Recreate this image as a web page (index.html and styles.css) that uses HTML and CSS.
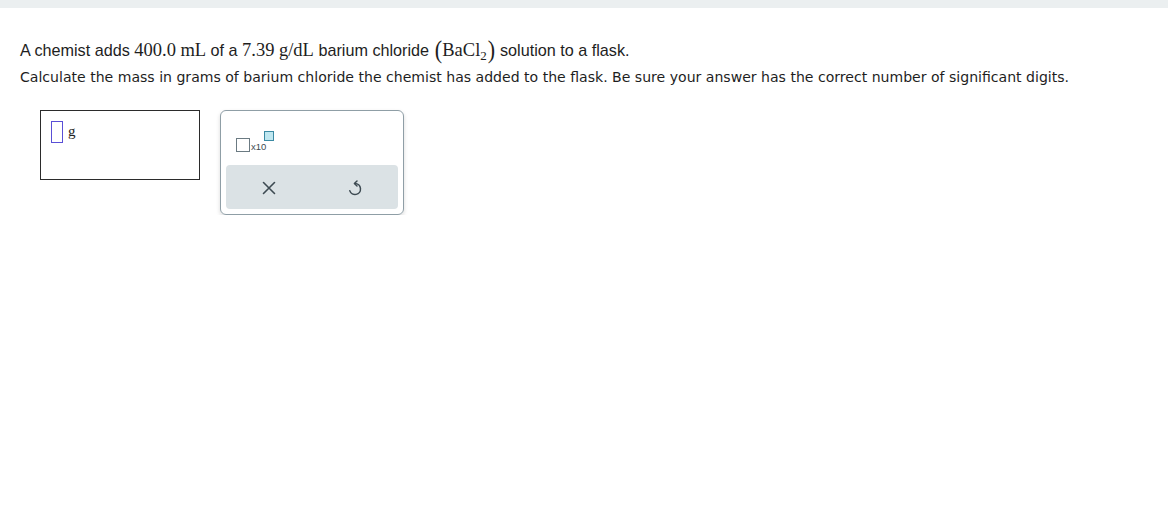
FILE: index.html
```html
<!DOCTYPE html>
<html>
<head>
<meta charset="utf-8">
<link rel="stylesheet" href="styles.css">
</head>
<body>
<div class="topbar"></div>
<div class="content">
  <p class="line1">A chemist adds <span class="m">400.0</span> <span class="m">mL</span> of a <span class="m">7.39</span> <span class="m">g/dL</span> barium chloride <span class="m formula"><span class="paren">(</span>BaCl<sub>2</sub><span class="paren">)</span></span> solution to a flask.</p>
  <p class="line2">Calculate the mass in grams of barium chloride the chemist has added to the flask. Be sure your answer has the correct number of significant digits.</p>
  <div class="work">
    <div class="answer">
      <span class="caret"></span><span class="unit">g</span>
    </div>
    <div class="pad">
      <div class="pad-top">
        <span class="sci"><span class="box-big"></span><span class="x10">x10</span><span class="box-small"></span></span>
      </div>
      <div class="pad-actions">
        <button class="btn" aria-label="clear">
          <svg width="16" height="16" viewBox="0 0 16 16"><path d="M2.5 2.5 L13.5 13.5 M13.5 2.5 L2.5 13.5" stroke="#3d4a52" stroke-width="1.6" fill="none" stroke-linecap="round"/></svg>
        </button>
        <button class="btn" aria-label="undo">
          <svg width="16" height="18" viewBox="0 0 16 18"><path d="M8 4.5 A5.5 5.5 0 1 1 2.8 11.8" stroke="#3d4a52" stroke-width="1.5" fill="none" stroke-linecap="round"/><path d="M10 2 L7.4 4.5 L10 7" stroke="#3d4a52" stroke-width="1.5" fill="none" stroke-linecap="round" stroke-linejoin="round"/></svg>
        </button>
      </div>
    </div>
  </div>
</div>
</body>
</html>
```
FILE: styles.css
```css
html, body {
  margin: 0;
  padding: 0;
  background: #ffffff;
}
.topbar {
  height: 8px;
  background: #ebeff0;
}
.content {
  padding: 0 20px;
  color: #1e1e1e;
}
.line1 {
  margin: 0;
  padding-top: 28px;
  height: 28px;
  font-family: "Liberation Sans", Arial, sans-serif;
  font-size: 16.2px;
  line-height: 28px;
  white-space: nowrap;
}
.m {
  font-family: "Liberation Serif", "Times New Roman", serif;
  font-size: 18.5px;
}
.formula sub {
  font-size: 13px;
  vertical-align: -4px;
  line-height: 0;
}
.paren {
  font-size: 26px;
  font-weight: 300;
  display: inline-block;
  transform: scaleX(0.85);
  vertical-align: -2px;
  line-height: 0;
}
.line2 {
  margin: 0;
  height: 26px;
  font-family: "DejaVu Sans", Verdana, sans-serif;
  font-size: 14.07px;
  line-height: 26px;
  white-space: nowrap;
}
.work {
  display: flex;
  align-items: flex-start;
  gap: 20px;
  padding: 20px 0 0 20px;
}
.answer {
  box-sizing: border-box;
  width: 160px;
  height: 70px;
  border: 1px solid #2b2b2b;
  display: flex;
  align-items: flex-start;
  padding: 10px 0 0 10px;
}
.caret {
  box-sizing: border-box;
  width: 12px;
  height: 22px;
  border: 1.5px solid #5a4fd6;
}
.unit {
  font-family: "Liberation Serif", "Times New Roman", serif;
  font-size: 15px;
  margin-left: 5px;
  margin-top: 2px;
  color: #222;
}
.pad {
  box-sizing: border-box;
  width: 184px;
  height: 105px;
  border: 1px solid #8f9ea6;
  border-radius: 6px;
  box-shadow: 0 2px 4px rgba(0,0,0,0.15);
  padding: 5px 5px 5px 5px;
  display: flex;
  flex-direction: column;
}
.pad-top {
  height: 49px;
  position: relative;
}
.sci {
  position: relative;
  display: inline-block;
  margin: 18px 0 0 10px;
  width: 40px;
  height: 20px;
}
.box-big {
  position: absolute;
  left: 0;
  top: 4px;
  box-sizing: border-box;
  width: 14px;
  height: 14px;
  border: 1.5px solid #6b7a82;
}
.x10 {
  position: absolute;
  left: 15px;
  top: 7px;
  font-family: "Liberation Sans", Arial, sans-serif;
  font-size: 9.5px;
  color: #3d4a52;
}
.box-small {
  position: absolute;
  left: 28px;
  top: -3px;
  box-sizing: border-box;
  width: 10px;
  height: 10px;
  border: 1.5px solid #3b8aa3;
  background: #bfe7f0;
}
.pad-actions {
  flex: 1;
  background: #dbe2e5;
  border-radius: 4px;
  display: flex;
  justify-content: space-around;
  align-items: center;
  padding-top: 2px;
}
.btn {
  border: none;
  background: transparent;
  padding: 0;
  width: 40px;
  height: 40px;
  display: flex;
  align-items: center;
  justify-content: center;
}
```
